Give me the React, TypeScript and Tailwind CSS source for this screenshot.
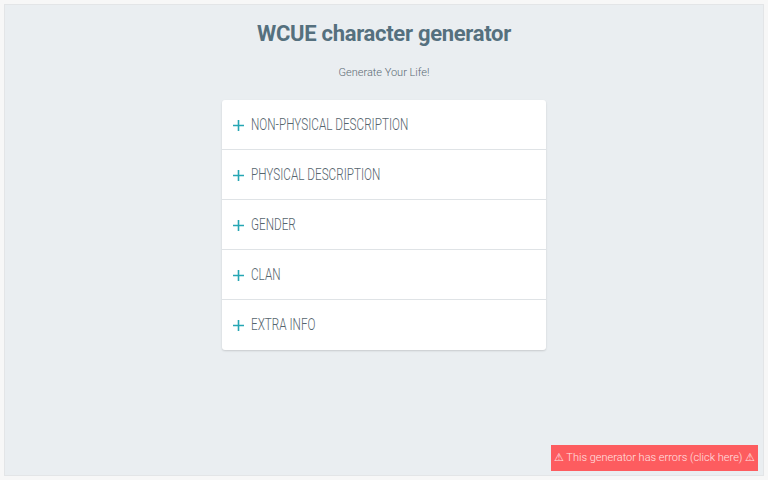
const sections = [
  "NON-PHYSICAL DESCRIPTION",
  "PHYSICAL DESCRIPTION",
  "GENDER",
  "CLAN",
  "EXTRA INFO",
];

function Plus() {
  return (
    <svg width="11" height="11" viewBox="0 0 11 11" className="shrink-0 text-[#26a6b4]" aria-hidden="true">
      <path d="M5.5 0v11M0 5.5h11" stroke="currentColor" strokeWidth="1.6" />
    </svg>
  );
}

export default function App() {
  return (
    <div className="h-[480px] w-[768px] bg-[#f7f7f7] p-[4px] font-['Roboto',sans-serif]">
      <div className="relative flex h-[472px] flex-col items-center border border-[#e3e5e7] bg-[#eaeef1]">
        <h1 className="mt-[14px] text-[22px] font-bold leading-[30px] tracking-[-0.3px] text-[#55707e]">
          WCUE character generator
        </h1>
        <p className="mt-[16px] text-[11px] font-light text-[#5a6a74]">Generate Your Life!</p>

        <div className="mt-[18px] w-[324px] rounded-[3px] bg-white shadow-[0_1px_2px_rgba(0,0,0,0.15)]">
          {sections.map((s, i) => (
            <div
              key={s}
              className={
                "flex h-[50px] items-center gap-[7px] px-[11px] pt-[2px] " +
                (i < sections.length - 1 ? "border-b border-[#dfe3e6]" : "")
              }
            >
              <Plus />
              <span className="inline-block origin-left scale-x-[0.71] text-[16.5px] font-light text-[#55646d]">
                {s}
              </span>
            </div>
          ))}
        </div>

        <div className="absolute bottom-[4px] right-[5px] flex h-[26px] w-[207px] items-center justify-center bg-[#fd5c5f] text-[11px] font-light text-[#ffe3e3]">
          ⚠ This generator has errors (click here) ⚠
        </div>
      </div>
    </div>
  );
}
